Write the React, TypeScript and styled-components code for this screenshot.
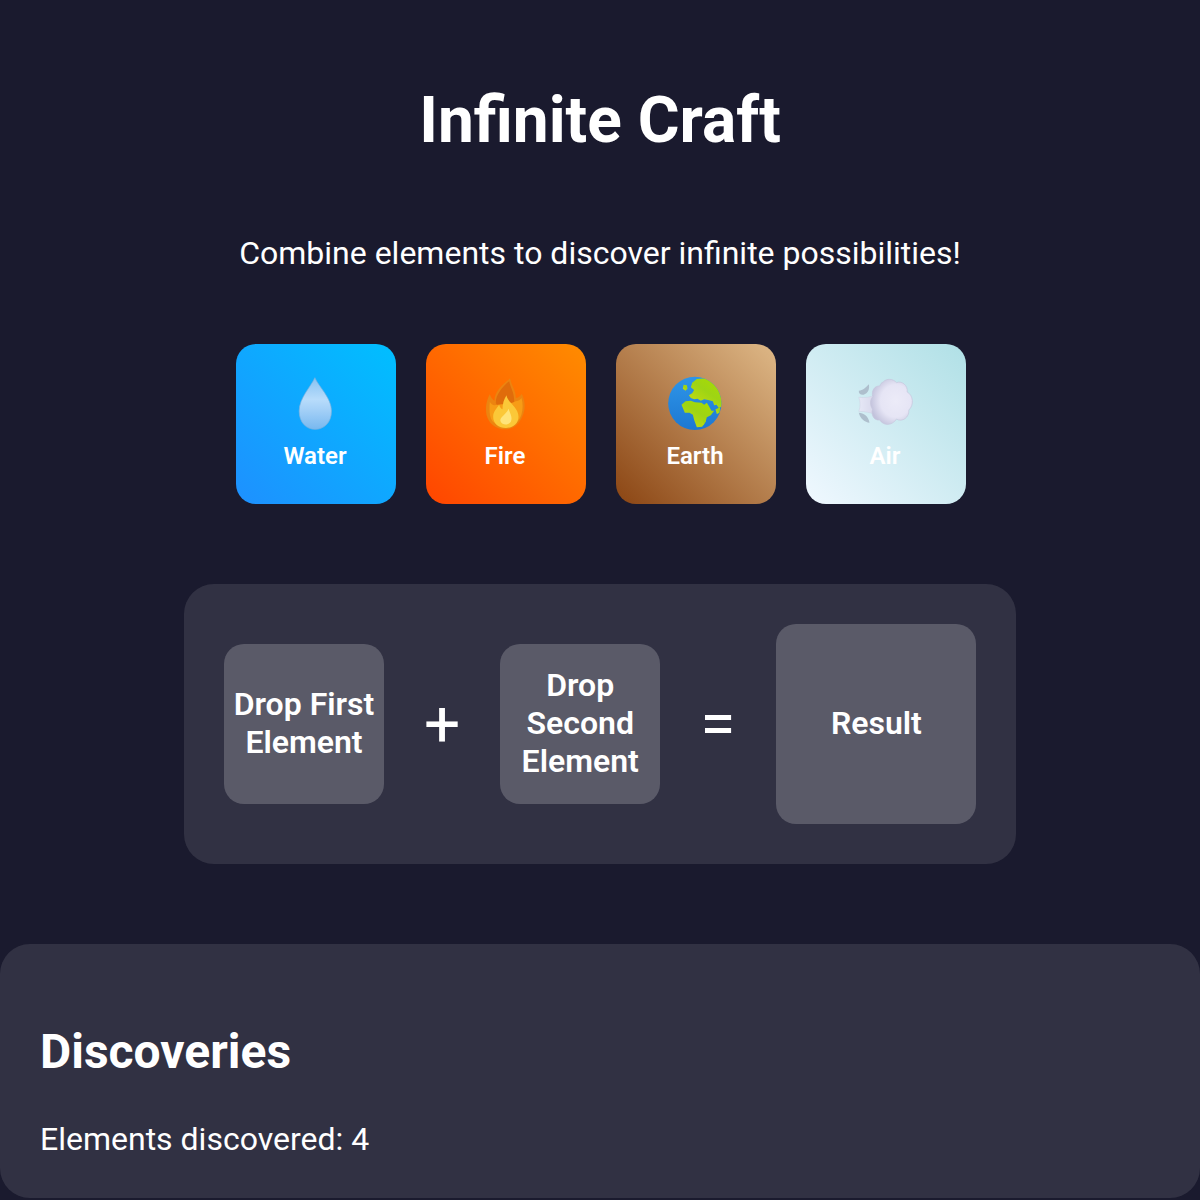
import React from 'react';
import styled, { createGlobalStyle } from 'styled-components';

const Global = createGlobalStyle`
  html, body { margin: 0; padding: 0; background: #1a1a2e; }
  body { font-family: Roboto, sans-serif; color: #fff; }
`;

const Page = styled.div`
  width: 1200px;
  height: 1200px;
  overflow: hidden;
  display: flex;
  flex-direction: column;
  align-items: center;
  background: #1a1a2e;
`;

const Title = styled.h1`
  margin: 83px 0 0;
  font-size: 64px;
  line-height: 75px;
  font-weight: 700;
  text-align: center;
`;

const Subtitle = styled.p`
  margin: 76px 0 0;
  font-size: 32px;
  line-height: 38px;
  text-align: center;
`;

const Elements = styled.div`
  margin-top: 72px;
  padding-left: 1px;
  display: flex;
  gap: 30px;
`;

const Tile = styled.div<{ $bg: string }>`
  width: 160px;
  height: 160px;
  box-sizing: border-box;
  padding-bottom: 3px;
  border-radius: 20px;
  background: ${p => p.$bg};
  display: flex;
  flex-direction: column;
  align-items: center;
  justify-content: center;
  color: #fff;
  font-size: 24px;
  font-weight: 600;
`;

const Glyph = styled.svg`
  display: block;
  width: 56px;
  height: 56px;
  margin-bottom: 11px;
`;

const Label = styled.span`
  line-height: 28px;
  padding-right: 1px;
`;

const Combiner = styled.div`
  margin-top: 80px;
  width: 832px;
  height: 280px;
  box-sizing: border-box;
  padding: 40px;
  border-radius: 30px;
  background: rgba(255, 255, 255, 0.1);
  display: flex;
  align-items: center;
  gap: 40px;
`;

const Slot = styled.div<{ $size: number }>`
  width: ${p => p.$size}px;
  height: ${p => p.$size}px;
  flex: none;
  box-sizing: border-box;
  padding-bottom: 2px;
  border-radius: 20px;
  background: rgba(255, 255, 255, 0.2);
  display: flex;
  align-items: center;
  justify-content: center;
  text-align: center;
  font-size: 32px;
  line-height: 38px;
  font-weight: 600;
`;

const Operator = styled.span`
  flex: none;
  width: 36.2px;
  font-size: 64px;
  line-height: 75px;
  font-weight: 400;
`;

const Panel = styled.section`
  margin-top: 80px;
  width: 1200px;
  height: 254px;
  flex: none;
  box-sizing: border-box;
  padding: 40px;
  border-radius: 30px;
  background: rgba(255, 255, 255, 0.1);
`;

const PanelTitle = styled.h2`
  margin: 40px 0 0;
  font-size: 48px;
  line-height: 56px;
  font-weight: 700;
`;

const Count = styled.p`
  margin: 40px 0 0;
  font-size: 32px;
  line-height: 38px;
`;

const Drop = () => (
  <Glyph viewBox="4.5 27 168 168">
    <defs>
      <linearGradient id="drop" x1="0" y1="0" x2="0" y2="1">
        <stop offset="0" stopColor="#86c2f2" />
        <stop offset="0.42" stopColor="#b8dcfb" />
        <stop offset="0.62" stopColor="#a4d0f7" />
        <stop offset="1" stopColor="#78b8ef" />
      </linearGradient>
    </defs>
    <path
      d="M85 35 C75 60 38 95 38 135 C38 170 60 190 86 190 C112 190 135 170 135 135 C135 95 95 60 85 35 Z"
      fill="url(#drop)"
      stroke="#7fb2dc"
      strokeWidth="2"
    />
  </Glyph>
);

const Flame = () => (
  <Glyph viewBox="4.5 27 168 168">
    <path
      d="M101 37 C104 58 118 72 118 96 C126 94 132 90 136 83 C146 104 148 128 138 150 C128 176 108 190 86 190 C58 190 36 172 30 146 C26 124 30 102 40 85 C43 94 47 100 54 104 C54 78 76 56 101 37 Z"
      fill="#ec8410"
    />
    <path
      d="M98 46 C102 66 114 80 113 108 C116 122 58 126 58 110 C58 86 78 62 98 46 Z"
      fill="#e06c0b"
    />
    <path
      d="M54 118 C70 114 100 116 118 106 C128 104 132 100 135 96 C142 120 138 150 124 166 C110 184 68 188 48 166 C38 152 38 130 40 108 C44 114 48 117 54 118 Z"
      fill="#f79c16"
    />
    <path
      d="M90 88 C92 108 126 124 126 152 C126 174 106 186 88 186 C66 186 50 172 50 152 C50 136 60 128 68 116 C70 124 74 128 78 130 C78 114 82 100 90 88 Z"
      fill="#fbc838"
    />
    <path
      d="M96 128 C100 142 108 150 104 164 C100 178 78 180 72 166 C68 152 90 146 96 128 Z"
      fill="#ffe47a"
    />
  </Glyph>
);

const Globe = () => (
  <Glyph viewBox="19.5 15 168 168">
    <defs>
      <linearGradient id="sea" x1="0" y1="0" x2="0" y2="1">
        <stop offset="0" stopColor="#2e95e8" />
        <stop offset="1" stopColor="#1d78d2" />
      </linearGradient>
      <linearGradient id="land" x1="0.1" y1="1" x2="0.9" y2="0">
        <stop offset="0" stopColor="#c8dc10" />
        <stop offset="0.55" stopColor="#9ed414" />
        <stop offset="1" stopColor="#a9dc00" />
      </linearGradient>
      <clipPath id="ball">
        <circle cx="100" cy="100" r="80" />
      </clipPath>
    </defs>
    <circle cx="100" cy="100" r="80" fill="url(#sea)" />
    <g clipPath="url(#ball)" fill="url(#land)">
      <path d="M88 52 L92 38 L106 27 L135 25 L165 45 L182 80 L183 108 L172 114 L165 104 L158 106 L154 94 L140 90 L128 88 L118 92 L108 86 L98 88 L88 84 L82 76 L92 70 L98 60 Z" />
      <path d="M60 104 L72 94 L88 92 L100 97 L120 98 L128 104 L136 98 L142 108 L150 122 L158 122 L148 136 L136 142 L132 156 L122 170 L106 172 L98 150 L94 134 L84 128 L70 128 Z" />
      <path d="M124 150 L130 148 L132 154 L126 166 L122 162 Z" />
      <path d="M66 44 L76 46 L78 56 L72 62 L64 56 Z" />
      <path d="M162 118 L176 112 L174 128 L166 132 Z" />
    </g>
  </Glyph>
);

const Puff = () => (
  <Glyph viewBox="19.5 15 168 168">
    <defs>
      <radialGradient id="cloud" cx="0.6" cy="0.48" r="0.6">
        <stop offset="0" stopColor="#ecebf8" />
        <stop offset="0.6" stopColor="#e6e5f5" />
        <stop offset="1" stopColor="#c3c3dc" />
      </radialGradient>
      <linearGradient id="tube" x1="0" y1="0" x2="1" y2="0">
        <stop offset="0" stopColor="#e6e8f6" />
        <stop offset="1" stopColor="#d6d6ea" />
      </linearGradient>
    </defs>
    <path
      d="M22 82 C40 84 56 82 72 74 L74 134 C58 128 40 124 22 124 C27 110 27 96 22 82 Z"
      fill="url(#tube)"
      stroke="#cdd0e2"
      strokeWidth="1.5"
    />
    <path
      d="M95 36 C105 24 125 26 135 38 C150 31 170 46 167 66 C186 76 188 106 172 120 C174 142 152 158 135 147 C122 168 95 168 85 150 C68 152 58 136 63 118 C54 104 56 88 64 80 C58 63 70 46 85 48 C86 42 90 38 95 36 Z"
      fill="url(#cloud)"
      stroke="#c6c6dc"
      strokeWidth="2"
    />
    <path d="M22 62 C34 62 42 54 52 43 C55 56 50 71 36 74 C27 75 21 70 22 62 Z" fill="#aebfcd" />
    <path d="M22 128 C36 129 50 136 54 158 C40 156 26 146 22 128 Z" fill="#aebfcd" />
  </Glyph>
);

const tiles = [
  { name: 'Water', icon: <Drop />, bg: 'linear-gradient(45deg, #1e90ff, #00bfff)' },
  { name: 'Fire', icon: <Flame />, bg: 'linear-gradient(45deg, #ff4500, #ff8c00)' },
  { name: 'Earth', icon: <Globe />, bg: 'linear-gradient(45deg, #8b4513, #deb887)' },
  { name: 'Air', icon: <Puff />, bg: 'linear-gradient(45deg, #f0f8ff, #b0e0e6)' },
];

export default function App() {
  return (
    <Page>
      <Global />
      <Title>Infinite Craft</Title>
      <Subtitle>Combine elements to discover infinite possibilities!</Subtitle>
      <Elements>
        {tiles.map(t => (
          <Tile key={t.name} $bg={t.bg}>
            {t.icon}
            <Label>{t.name}</Label>
          </Tile>
        ))}
      </Elements>
      <Combiner>
        <Slot $size={160}>Drop First Element</Slot>
        <Operator>+</Operator>
        <Slot $size={160}>Drop Second Element</Slot>
        <Operator>=</Operator>
        <Slot $size={200}>Result</Slot>
      </Combiner>
      <Panel>
        <PanelTitle>Discoveries</PanelTitle>
        <Count>Elements discovered: 4</Count>
      </Panel>
    </Page>
  );
}
